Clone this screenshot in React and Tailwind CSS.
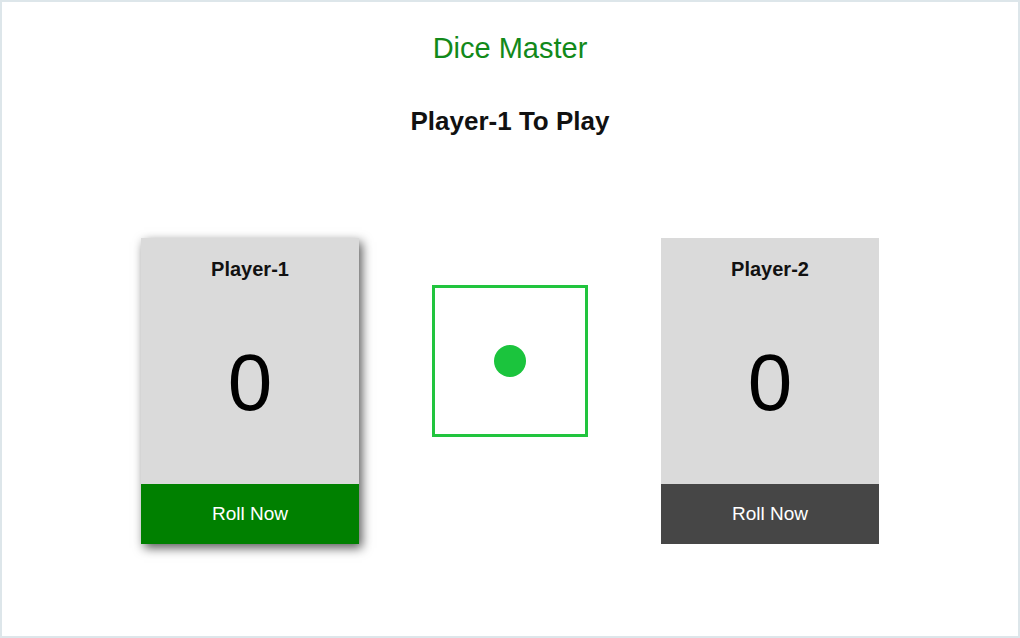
import { useState } from "react";

function PlayerCard({ name, score, active }) {
  return (
    <div
      className={`flex h-[306px] w-[218px] flex-col bg-[#dadada] ${
        active ? "shadow-[3px_4px_10px_rgba(0,0,0,0.65)]" : ""
      }`}
    >
      <div className="pt-[19px] text-center text-[20px] font-bold leading-[24px] text-[#111]">{name}</div>
      <div className="flex flex-1 items-center justify-center text-[80px] leading-none text-black">{score}</div>
      <button
        className={`h-[60px] w-full text-[19px] text-white ${active ? "bg-[#008000]" : "bg-[#464646]"}`}
      >
        Roll Now
      </button>
    </div>
  );
}

export default function App() {
  const [scores] = useState([0, 0]);

  return (
    <div
      className="h-[638px] w-full border-2 border-[#dde6ea] bg-white"
      style={{ fontFamily: '"Liberation Sans", Arial, sans-serif' }}
    >
      <h1 className="pt-[30px] text-center text-[29px] leading-[32px] text-[#12891a]">Dice Master</h1>
      <h2 className="mt-[42px] text-center text-[26px] font-bold leading-[30px] text-[#111]">Player-1 To Play</h2>

      <div className="mt-[102px] flex items-start justify-center gap-[73px]">
        <PlayerCard name="Player-1" score={scores[0]} active />
        <div className="mt-[47px] flex h-[152px] w-[156px] items-center justify-center border-[3px] border-[#21c43e]">
          <div className="h-[32px] w-[32px] rounded-full bg-[#1bc43d]" />
        </div>
        <PlayerCard name="Player-2" score={scores[1]} />
      </div>
    </div>
  );
}
